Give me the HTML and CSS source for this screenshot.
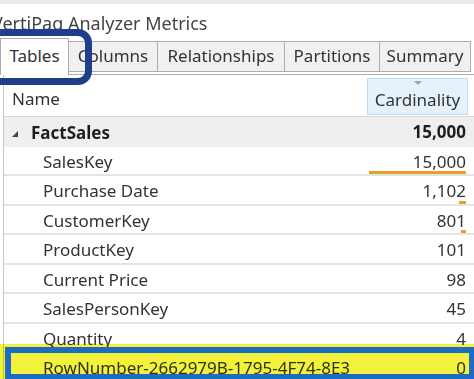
FILE: index.html
```html
<!DOCTYPE html>
<html>
<head>
<meta charset="utf-8">
<link rel="stylesheet" href="styles.css">
</head>
<body>
<div class="topstrip"></div>
<h1 class="title">VertiPaq Analyzer Metrics</h1>
<div class="tabs">
  <div class="tab active t-tables">Tables</div>
  <div class="tab t-columns">Columns</div>
  <div class="tab t-rel">Relationships</div>
  <div class="tab t-part">Partitions</div>
  <div class="tab t-sum">Summary</div>
</div>
<div class="panel">
  <div class="head">
    <div class="h-name">Name</div>
    <div class="h-card">
      <svg class="sort" width="8" height="4" viewBox="0 0 8 4"><polygon points="0,0 8,0 4,4" fill="#9aa7b8"/></svg>
      <span>Cardinality</span>
    </div>
  </div>
  <div class="row group">
    <div class="name"><svg class="expander" width="6" height="6" viewBox="0 0 6 6"><polygon points="6,0 6,6 0,6" fill="#444"/></svg>FactSales</div>
    <div class="val">15,000</div>
  </div>
  <div class="row">
    <div class="name child">SalesKey</div>
    <div class="val"><span>15,000</span><div class="track"><div class="bar" style="width:100%"></div></div></div>
  </div>
  <div class="row">
    <div class="name child">Purchase Date</div>
    <div class="val"><span>1,102</span><div class="track"><div class="bar" style="width:7.35%"></div></div></div>
  </div>
  <div class="row">
    <div class="name child">CustomerKey</div>
    <div class="val"><span>801</span><div class="track"><div class="bar" style="width:5.34%"></div></div></div>
  </div>
  <div class="row">
    <div class="name child">ProductKey</div>
    <div class="val"><span>101</span></div>
  </div>
  <div class="row">
    <div class="name child">Current Price</div>
    <div class="val"><span>98</span></div>
  </div>
  <div class="row">
    <div class="name child">SalesPersonKey</div>
    <div class="val"><span>45</span></div>
  </div>
  <div class="row">
    <div class="name child">Quantity</div>
    <div class="val"><span>4</span></div>
  </div>
  <div class="row">
    <div class="name child">RowNumber-2662979B-1795-4F74-8E3</div>
    <div class="val"><span>0</span></div>
  </div>
</div>
<div class="hl-yellow"></div>
<div class="hl-row"></div>
<div class="hl-tab"></div>
</body>
</html>
```
FILE: styles.css
```css
* { box-sizing: border-box; }
html, body { margin: 0; padding: 0; }
body {
  width: 474px;
  height: 379px;
  overflow: hidden;
  position: relative;
  background: #fff;
  font-family: "Noto Sans", "Open Sans", sans-serif;
  color: #333;
}
.topstrip { height: 4px; background: #ebebeb; }
.title {
  margin: 0 0 0 -8px;
  padding-top: 7px;
  height: 34px;
  font-size: 18px;
  line-height: 24px;
  font-weight: normal;
  color: #444;
  white-space: nowrap;
}
.tabs {
  display: flex;
  height: 37px;
  border-bottom: 1px solid #acacac;
}
.tab {
  margin-top: 3px;
  height: 31px;
  border: 1px solid #acacac;
  border-left: none;
  background: #f0f0f0;
  font-size: 17px;
  line-height: 27px;
  text-align: center;
  color: #333;
  white-space: nowrap;
}
.tab.active {
  margin-top: 0;
  height: 37px;
  background: #fff;
  border-left: 1px solid #acacac;
  border-bottom: none;
  padding-top: 3px;
  position: relative;
  z-index: 1;
}
.t-tables { width: 69px; }
.t-columns { width: 89px; }
.t-rel { width: 127px; }
.t-part { width: 95px; }
.t-sum { width: 91px; }

.panel {
  margin-left: 3px;
  border-left: 1px solid #c8c8c8;
  font-size: 17px;
}
.head {
  display: grid;
  grid-template-columns: 1fr 101px;
  height: 42px;
  padding-right: 6px;
  border-bottom: 1px solid #d8d8d8;
}
.h-name {
  padding: 12px 0 0 8px;
  line-height: 24px;
  color: #333;
}
.h-card {
  margin-top: 3px;
  height: 37px;
  background: #e5f2fb;
  border: 1px solid #c3def4;
  display: flex;
  flex-direction: column;
  align-items: center;
  padding-top: 2px;
}
.sort { display: block; }
.h-card span {
  margin-top: 3px;
  line-height: 24px;
  color: #333;
}
.row {
  display: grid;
  grid-template-columns: 1fr 107px;
  height: 29.5px;
  padding-top: 2px;
  border-bottom: 2px solid #e4e4e4;
  line-height: 25.5px;
}
.row.group {
  background: #efefef;
  border-bottom: none;
  font-weight: bold;
  color: #1e1e1e;
}
.name {
  white-space: nowrap;
  overflow: hidden;
  display: flex;
  align-items: center;
}
.group .name { padding-left: 8px; }
.expander { margin-right: 13px; margin-top: 3px; }
.name.child { padding-left: 39px; display: block; }
.val {
  padding-right: 8px;
  text-align: right;
  display: flex;
  flex-direction: column;
  align-items: flex-end;
}
.track {
  width: 97px;
  height: 3px;
  margin-top: -3px;
  display: flex;
  justify-content: flex-end;
}
.bar { height: 3px; background: #e6a423; }

.hl-yellow {
  position: absolute;
  left: 0;
  top: 344px;
  width: 474px;
  height: 36px;
  background: #f2f23c;
  mix-blend-mode: multiply;
}
.hl-row {
  position: absolute;
  left: 5px;
  top: 347px;
  width: 470px;
  height: 33px;
  border: 6px solid #1d6bc4;
}
.hl-tab {
  position: absolute;
  left: -20px;
  top: 29px;
  width: 112px;
  height: 56px;
  border: 7px solid #1f3e8c;
  border-radius: 14px;
}
```
